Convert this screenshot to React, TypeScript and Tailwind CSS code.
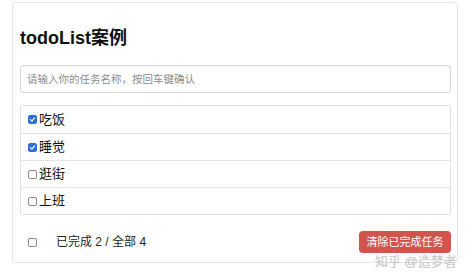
import { useState } from "react";

type Todo = { id: number; name: string; done: boolean };

const font = "font-['Liberation_Sans','Noto_Sans_CJK_SC',sans-serif]";

// Small checkbox drawn by hand so its size matches the screenshot
const Box = ({ checked, onClick }: { checked: boolean; onClick?: () => void }) => (
  <span
    onClick={onClick}
    className={`flex h-[9px] w-[9px] shrink-0 cursor-pointer items-center justify-center rounded-[2px] border ${
      checked ? "border-[#2f6fdc] bg-[#2f6fdc]" : "border-[#8a8a8a] bg-white"
    }`}
  >
    {checked && (
      <svg viewBox="0 0 10 10" className="h-[7px] w-[7px]">
        <path d="M2 5.2 L4.2 7.3 L8 2.8" fill="none" stroke="white" strokeWidth="1.6" strokeLinecap="round" strokeLinejoin="round" />
      </svg>
    )}
  </span>
);

export default function App() {
  const [todos, setTodos] = useState<Todo[]>([
    { id: 1, name: "吃饭", done: true },
    { id: 2, name: "睡觉", done: true },
    { id: 3, name: "逛街", done: false },
    { id: 4, name: "上班", done: false },
  ]);

  const doneCount = todos.filter((t) => t.done).length;

  const toggle = (id: number) =>
    setTodos(todos.map((t) => (t.id === id ? { ...t, done: !t.done } : t)));

  return (
    <div className={`relative h-[278px] w-[474px] bg-white ${font}`}>
      <div className="ml-[12px] mt-[2px] flex h-[261px] w-[446px] flex-col rounded-[4px] border border-[#e4e4e4] px-[7px]">
        <h1 className="mt-[22px] h-[26px] text-[18px] font-bold leading-[26px] text-[#111]">todoList案例</h1>

        <input
          className="mt-[14px] h-[28px] w-[431px] rounded-[3px] border border-[#d9d9d9] px-[6px] text-[10.5px] text-[#333] shadow-[inset_0_1px_1px_rgba(0,0,0,0.06)] outline-none placeholder:text-[#8c8c8c]"
          placeholder="请输入你的任务名称，按回车键确认"
        />

        {/* Task list */}
        <ul className="mt-[12px] w-[431px] rounded-[2px] border border-[#e2e2e2]">
          {todos.map((t, i) => (
            <li
              key={t.id}
              className={`flex h-[27px] items-center gap-[2px] pl-[7px] text-[13px] text-[#111] ${
                i > 0 ? "border-t border-[#e2e2e2]" : ""
              }`}
            >
              <Box checked={t.done} onClick={() => toggle(t.id)} />
              <span>{t.name}</span>
            </li>
          ))}
        </ul>

        {/* Footer */}
        <div className="mt-[16px] flex w-[431px] items-center">
          <span className="ml-[8px]">
            <Box checked={false} />
          </span>
          <span className="ml-[19px] text-[12px] text-[#222]">
            已完成 {doneCount} / 全部 {todos.length}
          </span>
          <button
            onClick={() => setTodos(todos.filter((t) => !t.done))}
            className="ml-auto h-[22px] w-[92px] rounded-[4px] bg-[#d2544d] text-[11px] text-white"
          >
            清除已完成任务
          </button>
        </div>
      </div>

      {/* watermark */}
      <span className="pointer-events-none absolute left-[375px] top-[250px] text-[13px] text-[#c8c8c8]/90 [text-shadow:0_0_1px_rgba(0,0,0,0.15)]">
        知乎 @造梦者
      </span>
    </div>
  );
}
